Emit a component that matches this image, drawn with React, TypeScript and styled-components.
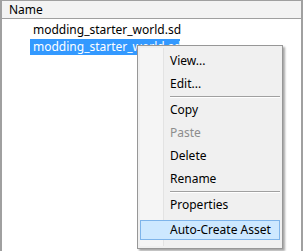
import React from 'react';
import styled, { createGlobalStyle } from 'styled-components';

const GlobalStyle = createGlobalStyle`
  html, body {
    margin: 0;
    padding: 0;
    background: #ffffff;
  }
  body {
    font-family: "Noto Sans", "Open Sans", sans-serif;
    font-size: 12px;
  }
`;

const Panel = styled.div`
  position: relative;
  width: 303px;
  height: 251px;
  box-sizing: border-box;
  border-left: 2px solid #a0a0a0;
  border-right: 2px solid #a0a0a0;
  border-top: 1px solid #a0a0a0;
  background: #ffffff;
  overflow: hidden;
  display: flex;
  flex-direction: column;
`;

const Header = styled.div`
  height: 17px;
  flex: none;
  background: #f3f3f3;
  border-bottom: 1px solid #a0a0a0;
  display: flex;
  align-items: center;
  padding-left: 7px;
  color: #000;
  font-size: 12px;
`;

const List = styled.div`
  display: flex;
  flex-direction: column;
  padding: 3px 0 0 28px;
  gap: 1px;
`;

const Row = styled.div<{ $selected?: boolean }>`
  align-self: flex-start;
  height: 16px;
  line-height: 16px;
  padding: 0 3px;
  white-space: nowrap;
  background: ${(p) => (p.$selected ? '#3399ff' : 'transparent')};
  color: ${(p) => (p.$selected ? '#ffffff' : '#000000')};
  width: ${(p) => (p.$selected ? '144px' : 'auto')};
  overflow: hidden;
`;

const Menu = styled.div`
  position: absolute;
  left: 135px;
  top: 44px;
  width: 140px;
  background: #f0f0f0;
  border: 1px solid #979797;
  box-shadow: 2px 2px 2px rgba(0, 0, 0, 0.35);
  padding: 3px 2px 8px 2px;
  display: flex;
  flex-direction: column;
  font-size: 12px;
`;

const Gutter = styled.div`
  position: absolute;
  left: 2px;
  top: 2px;
  bottom: 2px;
  width: 23px;
  background: #f5f5f5;
  border-right: 1px solid #e3e3e3;
`;

const Item = styled.div<{ $disabled?: boolean; $active?: boolean }>`
  position: relative;
  height: ${(p) => (p.$active ? '20px' : '23px')};
  line-height: ${(p) => (p.$active ? '18px' : '23px')};
  margin-top: ${(p) => (p.$active ? '4px' : '0')};
  box-sizing: border-box;
  padding-left: ${(p) => (p.$active ? '29px' : '30px')};
  color: ${(p) => (p.$disabled ? '#8d8d8d' : '#000000')};
  background: ${(p) => (p.$active ? '#cde8ff' : 'transparent')};
  border: ${(p) => (p.$active ? '1px solid #7eb4ea' : 'none')};
  white-space: nowrap;
`;

const Separator = styled.div`
  position: relative;
  margin: 1px 0 0 30px;
  height: 1px;
  background: #a0a0a0;
  border-bottom: 1px solid #ffffff;
`;

export default function App() {
  return (
    <>
      <GlobalStyle />
      <Panel>
        <Header>Name</Header>
        <List>
          <Row>modding_starter_world.sd</Row>
          <Row $selected>modding_starter_world.sd</Row>
        </List>
        <Menu>
          <Gutter />
          <Item>View...</Item>
          <Item>Edit...</Item>
          <Separator />
          <Item>Copy</Item>
          <Item $disabled>Paste</Item>
          <Item>Delete</Item>
          <Item>Rename</Item>
          <Separator />
          <Item>Properties</Item>
          <Item $active>Auto-Create Asset</Item>
        </Menu>
      </Panel>
    </>
  );
}
